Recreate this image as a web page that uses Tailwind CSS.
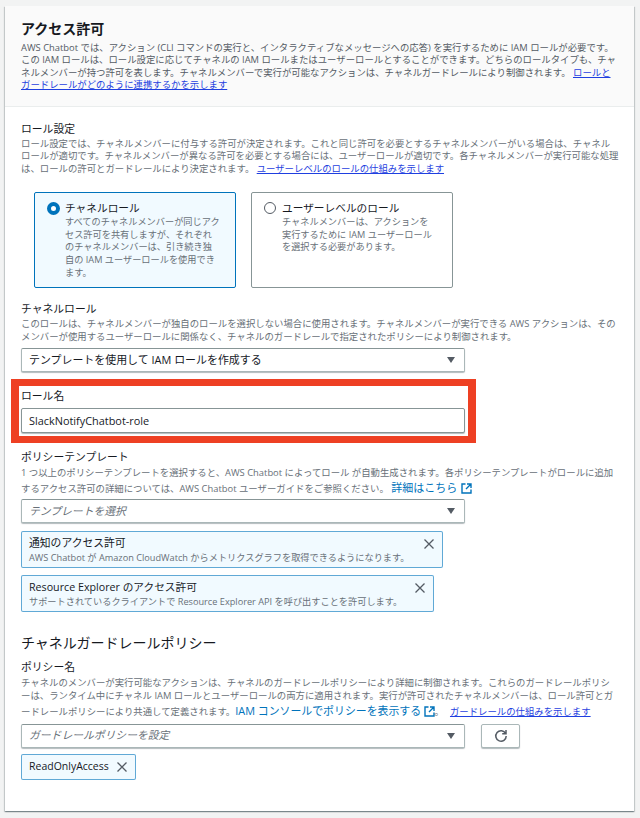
<!DOCTYPE html>
<html lang="ja">
<head>
<meta charset="utf-8">
<script src="https://cdn.jsdelivr.net/npm/@tailwindcss/browser@4"></script>
</head>
<body class="m-0 bg-[#f2f3f3] h-[818px] overflow-hidden font-['Open_Sans','Noto_Sans_CJK_JP',sans-serif] text-[#16191f]">
<div class="mx-[5px] mt-[6px] w-[629px] h-[805px] bg-white shadow-[0_1px_1px_0_rgba(0,28,36,0.3),1px_1px_1px_0_rgba(0,28,36,0.15),-1px_1px_1px_0_rgba(0,28,36,0.15)]">
  <div class="h-[101px] bg-[#fafafa] border-b border-[#eaeded] px-4 pt-[14px]">
    <h1 class="text-[14px] leading-[18px] font-bold m-0">アクセス許可</h1>
    <p class="mt-[3.5px] text-[9.4px] leading-[12.5px] text-[#545b64] whitespace-nowrap">AWS Chatbot では、アクション (CLI コマンドの実行と、インタラクティブなメッセージへの応答) を実行するために IAM ロールが必要です。<br>この IAM ロールは、ロール設定に応じてチャネルの IAM ロールまたはユーザーロールとすることができます。どちらのロールタイプも、チャ<br>ネルメンバーが持つ許可を表します。チャネルメンバーで実行が可能なアクションは、チャネルガードレールにより制御されます。 <a class="text-[#1f3fe0] underline">ロールと<br>ガードレールがどのように連携するかを示します</a></p>
  </div>
  <div class="px-4 pt-[15px]">
    <div class="text-[10.8px] leading-[14px]">ロール設定</div>
    <p class="text-[9.4px] leading-[12.5px] text-[#687078] whitespace-nowrap mt-[1.75px]">ロール設定では、チャネルメンバーに付与する許可が決定されます。これと同じ許可を必要とするチャネルメンバーがいる場合は、チャネル<br>ロールが適切です。チャネルメンバーが異なる許可を必要とする場合には、ユーザーロールが適切です。各チャネルメンバーが実行可能な処理<br>は、ロールの許可とガードレールにより決定されます。 <a class="text-[#1f3fe0] underline">ユーザーレベルのロールの仕組みを示します</a></p>

    <div class="flex gap-[15px] ml-[13px] mt-[17px]">
      <div class="w-[202px] h-[96px] rounded-[2px] border border-[#0073bb] bg-[#f1faff] flex pl-[12px] pt-[8px] gap-[5px]">
        <span class="w-[13px] h-[13px] mt-[1px] shrink-0 rounded-full border-[4px] border-[#0073bb] bg-white"></span>
        <div>
          <div class="text-[10.7px] leading-[14px]">チャネルロール</div>
          <div class="text-[9.2px] leading-[12.6px] text-[#687078] whitespace-nowrap mt-[1px]">すべてのチャネルメンバーが同じアク<br>セス許可を共有しますが、それぞれ<br>のチャネルメンバーは、引き続き独<br>自の IAM ユーザーロールを使用でき<br>ます。</div>
        </div>
      </div>
      <div class="w-[202px] h-[96px] rounded-[2px] border border-[#879596] bg-white flex pl-[12px] pt-[8px] gap-[6px]">
        <span class="w-[12px] h-[12px] mt-[1px] shrink-0 rounded-full border border-[#545b64] bg-white"></span>
        <div>
          <div class="text-[10.7px] leading-[14px]">ユーザーレベルのロール</div>
          <div class="text-[9.2px] leading-[12.6px] text-[#687078] whitespace-nowrap mt-[1px]">チャネルメンバーは、アクションを<br>実行するために IAM ユーザーロール<br>を選択する必要があります。</div>
        </div>
      </div>
    </div>

    <div class="text-[10.8px] leading-[14px] mt-[14px]">チャネルロール</div>
    <p class="text-[9.4px] leading-[12.5px] text-[#687078] whitespace-nowrap mt-[2px]">このロールは、チャネルメンバーが独自のロールを選択しない場合に使用されます。チャネルメンバーが実行できる AWS アクションは、その<br>メンバーが使用するユーザーロールに関係なく、チャネルのガードレールで指定されたポリシーにより制御されます。</p>
    <div class="mt-[5px] w-[444px] h-[24px] rounded-[2px] border border-[#aab7b8] border-t-[#879596] shadow-[0_1px_1px_0_rgba(0,28,36,0.3)] bg-white flex items-center justify-between pl-[7px] pr-[9px]">
      <span class="text-[10.95px]">テンプレートを使用して IAM ロールを作成する</span>
      <svg width="8" height="6" viewBox="0 0 8 6"><path d="M0 0h8L4 6z" fill="#545b64"/></svg>
    </div>

    <div class="mt-[7px] -ml-[10px] w-[465px] h-[64px] border-[8px] border-y-[7px] border-[#ee4023] pl-[2px] pr-[2px] bg-white">
      <div class="text-[10.8px] leading-[14px] pt-[3px] box-content">ロール名</div>
      <div class="mt-[5px] w-[444px] h-[25px] rounded-[2px] border border-[#879596] shadow-[0_1px_1px_0_rgba(0,28,36,0.3)] bg-white flex items-center pl-[7px] pt-[1px] text-[10.9px]">SlackNotifyChatbot-role</div>
    </div>

    <div class="text-[10.8px] leading-[14px] mt-[7px]">ポリシーテンプレート</div>
    <p class="h-[30px] text-[9.4px] leading-[15px] text-[#687078] whitespace-nowrap mt-[0.5px]">1 つ以上のポリシーテンプレートを選択すると、AWS Chatbot によってロール が自動生成されます。各ポリシーテンプレートがロールに追加<br>するアクセス許可の詳細については、AWS Chatbot ユーザーガイドをご参照ください。 <a class="text-[#0073bb] text-[11px]">詳細はこちら</a> <svg class="inline-block align-[-2px] ml-[1px]" width="11" height="11" viewBox="0 0 11 11" fill="none" stroke="#0073bb" stroke-width="1.4"><path d="M4.5 1H1v9h9V6.5M6 1h4v4M10 1 5 6"/></svg></p>
    <div class="mt-[4.5px] w-[444px] h-[24px] rounded-[2px] border border-[#aab7b8] border-t-[#879596] shadow-[0_1px_1px_0_rgba(0,28,36,0.3)] bg-white flex items-center justify-between pl-[7px] pr-[9px]">
      <span class="text-[10.8px] italic text-[#687078]">テンプレートを選択</span>
      <svg width="8" height="6" viewBox="0 0 8 6"><path d="M0 0h8L4 6z" fill="#545b64"/></svg>
    </div>

    <div class="mt-[8px] w-[421.5px] h-[37px] rounded-[2px] border border-[#0073bb]/60 bg-[#f1faff] relative pl-[7px] pt-[4px]">
      <div class="text-[10.8px] leading-[14px]">通知のアクセス許可</div>
      <div class="text-[9.2px] leading-[12.5px] text-[#687078] mt-[2px] whitespace-nowrap">AWS Chatbot が Amazon CloudWatch からメトリクスグラフを取得できるようになります。</div>
      <svg class="absolute right-[7px] top-[6px]" width="12" height="12" viewBox="0 0 12 12" fill="none" stroke="#545b64" stroke-width="1.3"><path d="m1.5 1.5 9 9M10.5 1.5l-9 9"/></svg>
    </div>
    <div class="mt-[7px] w-[412.5px] h-[37px] rounded-[2px] border border-[#0073bb]/60 bg-[#f1faff] relative pl-[7px] pt-[4px]">
      <div class="text-[10.7px] leading-[14px]">Resource Explorer のアクセス許可</div>
      <div class="text-[9.2px] leading-[12.5px] text-[#687078] mt-[2px] whitespace-nowrap">サポートされているクライアントで Resource Explorer API を呼び出すことを許可します。</div>
      <svg class="absolute right-[7px] top-[6px]" width="12" height="12" viewBox="0 0 12 12" fill="none" stroke="#545b64" stroke-width="1.3"><path d="m1.5 1.5 9 9M10.5 1.5l-9 9"/></svg>
    </div>

    <h2 class="text-[14px] leading-[20px] font-normal mt-[21px]">チャネルガードレールポリシー</h2>
    <div class="text-[10.8px] leading-[14px] mt-[7px]">ポリシー名</div>
    <div class="text-[9.4px] text-[#687078] whitespace-nowrap mt-[2.75px] leading-[12.5px]">チャネルのメンバーが実行可能なアクションは、チャネルのガードレールポリシーにより詳細に制御されます。これらのガードレールポリシ<br>ーは、ランタイム中にチャネル IAM ロールとユーザーロールの両方に適用されます。実行が許可されたチャネルメンバーは、ロール許可とガ</div>
    <div class="h-[15px] text-[9.4px] text-[#687078] whitespace-nowrap leading-[15px] mt-[1px]">ードレールポリシーにより共通して定義されます。<a class="text-[#0073bb] text-[10.9px]">IAM コンソールでポリシーを表示する</a> <svg class="inline-block align-[-2px]" width="11" height="11" viewBox="0 0 11 11" fill="none" stroke="#0073bb" stroke-width="1.4"><path d="M4.5 1H1v9h9V6.5M6 1h4v4M10 1 5 6"/></svg>。<a class="ml-[6px] text-[#1f3fe0] underline">ガードレールの仕組みを示します</a></div>
    <div class="mt-[5.5px] flex gap-[16px]">
      <div class="w-[444px] h-[24px] rounded-[2px] border border-[#aab7b8] border-t-[#879596] shadow-[0_1px_1px_0_rgba(0,28,36,0.3)] bg-white flex items-center justify-between pl-[7px] pr-[9px]">
        <span class="text-[10.8px] italic text-[#687078]">ガードレールポリシーを設定</span>
        <svg width="8" height="6" viewBox="0 0 8 6"><path d="M0 0h8L4 6z" fill="#545b64"/></svg>
      </div>
      <div class="w-[39px] h-[24px] rounded-[2px] border border-[#aab7b8] shadow-[0_1px_1px_0_rgba(0,28,36,0.3)] bg-white flex items-center justify-center">
        <svg width="14" height="14" viewBox="0 0 14 14" fill="none" stroke="#545b64" stroke-width="1.5"><path d="M11.6 4.6A5.2 5.2 0 1 0 12.2 7M12 1v3.8H8.2"/></svg>
      </div>
    </div>
    <div class="mt-[6px] w-[114.5px] h-[26px] rounded-[2px] border border-[#0073bb]/60 bg-[#f1faff] flex items-center justify-between pl-[7px] pr-[7px] text-[10.5px]">
      ReadOnlyAccess
      <svg width="12" height="12" viewBox="0 0 12 12" fill="none" stroke="#545b64" stroke-width="1.3"><path d="m1.5 1.5 9 9M10.5 1.5l-9 9"/></svg>
    </div>
  </div>
</div>
</body>
</html>
